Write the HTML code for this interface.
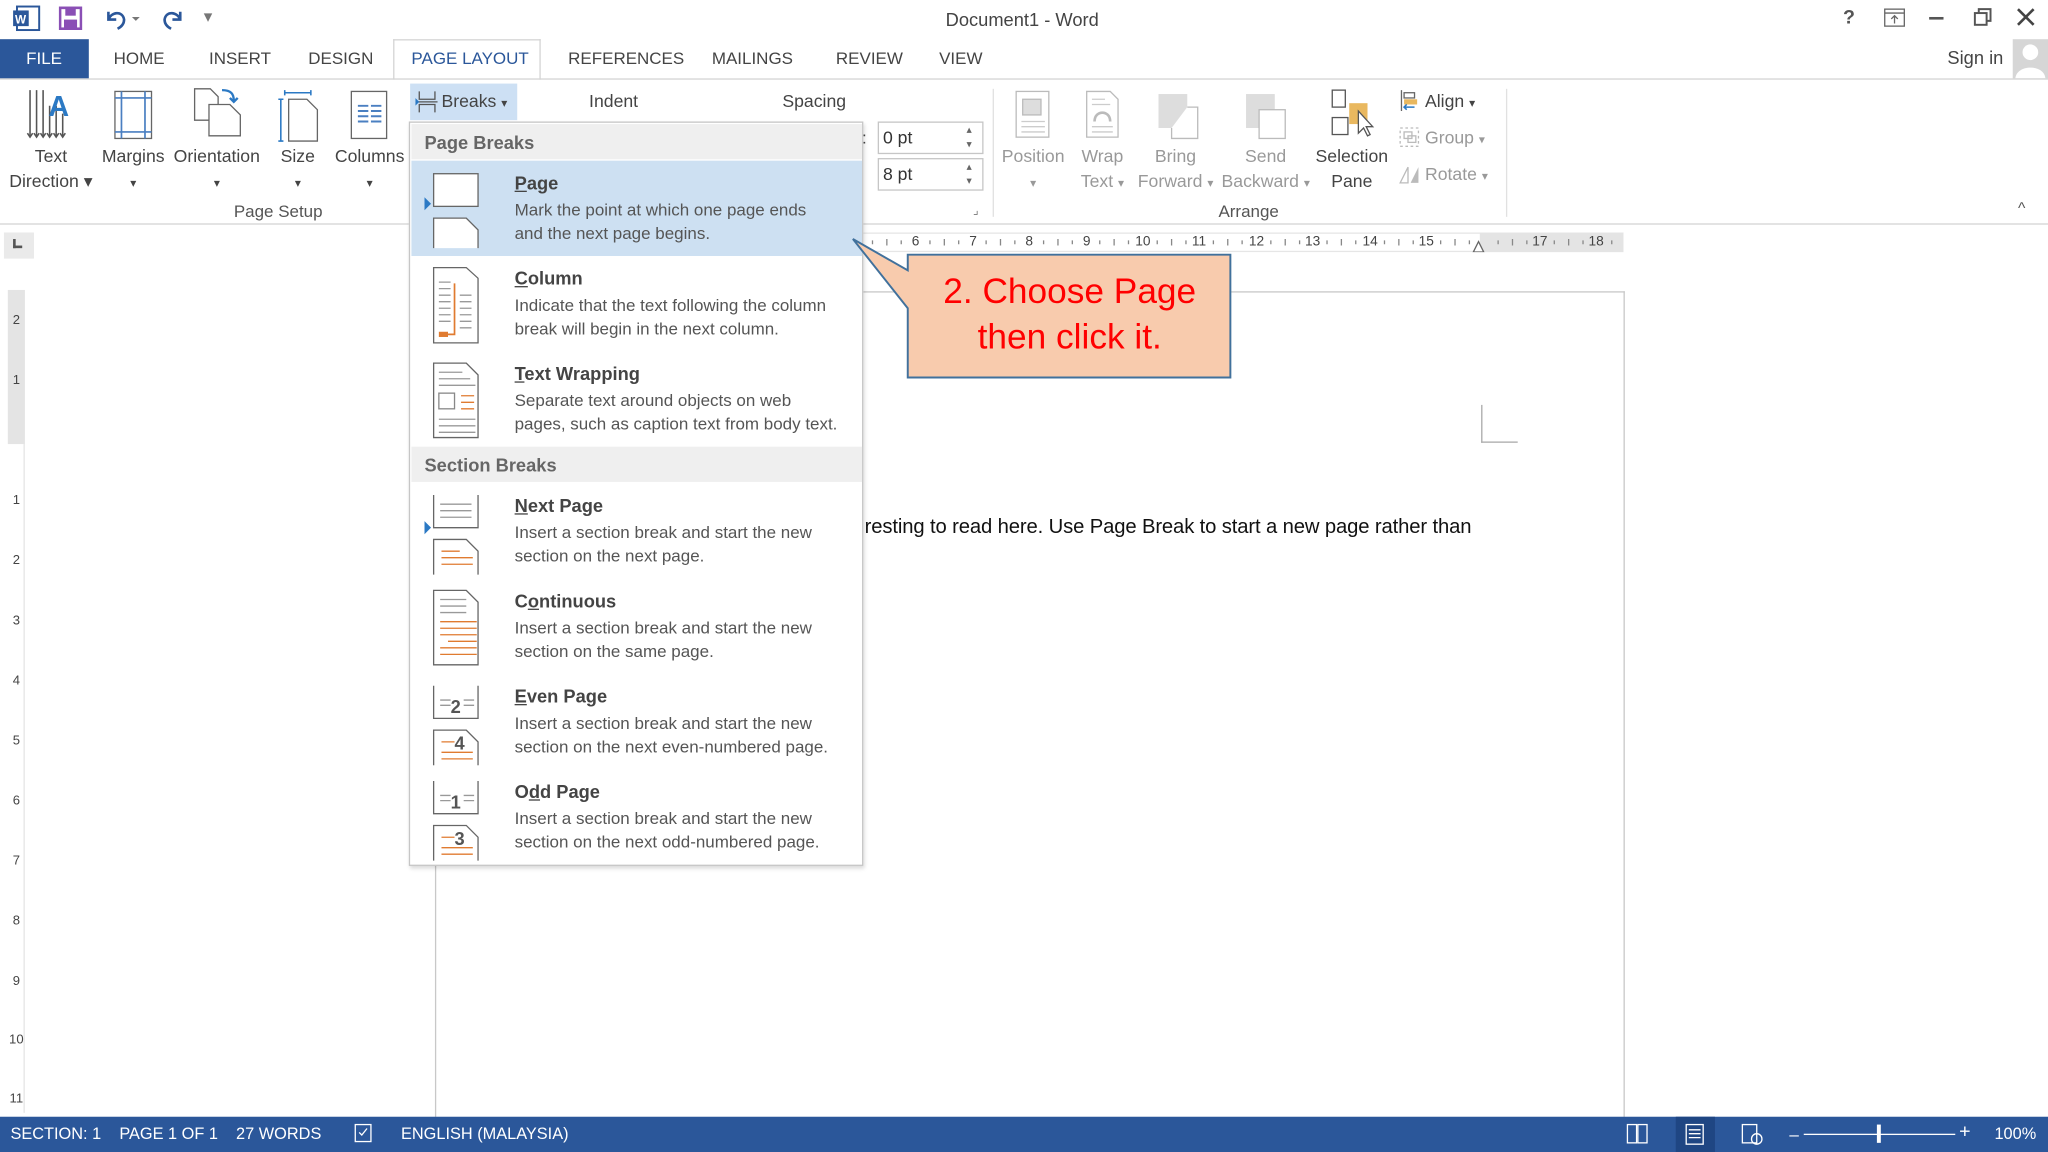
<!DOCTYPE html>
<html><head><meta charset="utf-8"><style>
*{margin:0;padding:0;box-sizing:border-box}
html,body{width:2048px;height:1152px;overflow:hidden;background:#fff}
#w{position:absolute;left:0;top:0;width:1568px;height:882px;transform:scale(1.306122);transform-origin:0 0;font-family:"Liberation Sans",sans-serif;color:#444;background:#fff}
.a{position:absolute}
.t{font-size:13px;color:#444;white-space:nowrap}
.tab{position:absolute;top:37px;font-size:13px;color:#444}
.lbl{position:absolute;font-size:13.5px;color:#444;text-align:center;white-space:nowrap;line-height:19px}
.gl{color:#999}
.mi{position:absolute;left:315px;width:345px;height:73px}
.mi .h{position:absolute;left:79px;top:9px;font-size:14px;font-weight:bold;color:#444}
.mi .d{position:absolute;left:79px;top:29px;font-size:13px;line-height:18px;color:#555;white-space:nowrap}
.mi svg{position:absolute;left:16px;top:8px}
.hd{position:absolute;left:315px;width:345px;height:27px;background:#efefef;font-size:14px;font-weight:bold;color:#666;padding:6px 10px}
.rn{position:absolute;top:179px;font-size:10.5px;color:#444;width:20px;margin-left:-10px;text-align:center}
.vn{position:absolute;left:6px;width:13px;font-size:10px;color:#444;text-align:center}
</style></head><body><div id="w">
<svg class="a" style="left:10px;top:4px" width="22" height="20"><rect x="3" y="1" width="17" height="18" fill="#fff" stroke="#2b579a" stroke-width="1.5"/><rect x="0" y="4" width="12" height="12" fill="#2b579a"/><text x="1.5" y="14" font-size="9" fill="#fff" font-family="Liberation Sans" font-weight="bold">W</text></svg>
<svg class="a" style="left:45px;top:5px" width="18" height="18"><rect x="1" y="1" width="16" height="16" fill="none" stroke="#8a4fb5" stroke-width="2"/><rect x="5" y="1" width="8" height="6" fill="#8a4fb5"/><rect x="4" y="10" width="10" height="7" fill="#8a4fb5"/></svg>
<svg class="a" style="left:78px;top:5px" width="30" height="18"><path d="M5 4 v6 h6 M5 10 C7 4 16 3 17 10 C17 14 14 16 12 17" fill="none" stroke="#2b579a" stroke-width="2"/><path d="M23 8 l3 3 3-3z" fill="#777"/></svg>
<svg class="a" style="left:122px;top:5px" width="22" height="18"><path d="M16 4 v6 h-6 M16 10 C14 4 5 3 4 10 C4 14 7 16 9 17" fill="none" stroke="#2b579a" stroke-width="2"/></svg>
<div class="a t" style="left:156px;top:5px;color:#777">▾</div>
<div class="a" style="left:724px;top:7px;font-size:14px;color:#444">Document1 - Word</div>
<div class="a" style="left:1411px;top:5px;font-size:15px;font-weight:bold;color:#555">?</div>
<svg class="a" style="left:1442px;top:6px" width="18" height="16"><rect x="1" y="1" width="15" height="13" fill="none" stroke="#666"/><line x1="1" y1="4" x2="16" y2="4" stroke="#666"/><path d="M8.5 6 v6 M6 8.5 l2.5-2.5 2.5 2.5" fill="none" stroke="#666"/></svg>
<div class="a" style="left:1477px;top:13px;width:11px;height:2px;background:#555"></div>
<svg class="a" style="left:1511px;top:6px" width="14" height="14"><rect x="1" y="4" width="9" height="9" fill="none" stroke="#555" stroke-width="1.5"/><path d="M4 4 V1 H13 V10 H10" fill="none" stroke="#555" stroke-width="1.5"/></svg>
<svg class="a" style="left:1544px;top:6px" width="14" height="14"><path d="M1 1 L13 13 M13 1 L1 13" stroke="#444" stroke-width="2"/></svg>
<div class="a" style="left:0;top:30px;width:68px;height:30px;background:#2b579a"></div>
<div class="a" style="left:20px;top:37px;font-size:13px;color:#fff">FILE</div>
<div class="a" style="left:301px;top:30px;width:113px;height:31px;background:#fff;border:1px solid #d4d4d4;border-bottom:none"></div>
<div class="tab" style="left:87px">HOME</div>
<div class="tab" style="left:160px">INSERT</div>
<div class="tab" style="left:236px">DESIGN</div>
<div class="tab" style="left:315px;color:#2b579a">PAGE LAYOUT</div>
<div class="tab" style="left:435px">REFERENCES</div>
<div class="tab" style="left:545px">MAILINGS</div>
<div class="tab" style="left:640px">REVIEW</div>
<div class="tab" style="left:719px">VIEW</div>
<div class="a" style="left:1491px;top:36px;font-size:14px;color:#444">Sign in</div>
<div class="a" style="left:1541px;top:30px;width:27px;height:30px;background:#d6d6d6"></div>
<svg class="a" style="left:1541px;top:30px" width="27" height="30"><circle cx="13.5" cy="10" r="6" fill="#fff"/><path d="M2 30 C3 19 24 19 25 30z" fill="#fff"/></svg>
<div class="a" style="left:0;top:60px;width:1568px;height:1px;background:#d4d4d4"></div>
<div class="a" style="left:0;top:171px;width:1568px;height:1px;background:#d4d4d4"></div>
<svg class="a" style="left:20px;top:67px" width="42" height="42"><g stroke="#555" stroke-width="1.2" fill="none"><path d="M3 2 V38 M8 2 V38 M13 2 V38 M18 14 V38 M23 14 V38 M28 20 V38"/><path d="M1 35 l2 3 2-3 M6 35 l2 3 2-3 M11 35 l2 3 2-3 M16 35 l2 3 2-3 M21 35 l2 3 2-3 M26 35 l2 3 2-3"/></g><text x="17" y="22" font-size="22" fill="#2b79c4" font-family="Liberation Sans" font-weight="bold">A</text></svg>
<div class="lbl" style="left:0;top:110px;width:78px">Text<br>Direction ▾</div>
<svg class="a" style="left:87px;top:69px" width="30" height="38"><rect x="1" y="1" width="28" height="36" fill="#fff" stroke="#666"/><path d="M6 1V37 M24 1V37 M1 6H29 M1 32H29" stroke="#4a7fc1" stroke-width="1.3"/></svg>
<div class="lbl" style="left:75px;top:110px;width:54px">Margins<br><span style="font-size:9px">▾</span></div>
<svg class="a" style="left:147px;top:66px" width="40" height="40"><path d="M2 2 H14 L20 8 V26 H2Z" fill="#fff" stroke="#666"/><path d="M13 14 H29 L37 22 V38 H13Z" fill="#fff" stroke="#666"/><path d="M23 3 C30 3 32 6 32 11 M29 9 l3 3 3-3" fill="none" stroke="#2b79c4" stroke-width="1.8"/></svg>
<div class="lbl" style="left:130px;top:110px;width:72px">Orientation<br><span style="font-size:9px">▾</span></div>
<svg class="a" style="left:213px;top:68px" width="32" height="42"><path d="M5 3H25 M5 1v4 M25 1v4 M2 8 V40 M0 8h4 M0 40h4" stroke="#2b79c4" stroke-width="1.2"/><path d="M8 8 H22 L30 16 V40 H8Z" fill="#fff" stroke="#666"/></svg>
<div class="lbl" style="left:210px;top:110px;width:36px">Size<br><span style="font-size:9px">▾</span></div>
<svg class="a" style="left:268px;top:69px" width="30" height="38"><rect x="1" y="1" width="27" height="36" fill="#fff" stroke="#666"/><path d="M6 12h8M16 12h8M6 16h8M16 16h8M6 20h8M16 20h8M6 24h8M16 24h8" stroke="#4a7fc1" stroke-width="1.5"/></svg>
<div class="lbl" style="left:252px;top:110px;width:62px">Columns<br><span style="font-size:9px">▾</span></div>
<div class="lbl gl" style="left:170px;top:152px;width:86px;color:#555;font-size:13px">Page Setup</div>
<div class="a" style="left:314px;top:64px;width:82px;height:28px;background:#cde0f4"></div>
<svg class="a" style="left:318px;top:69px" width="18" height="18"><path d="M3 1V7H15V1 M3 17V11H15V17 M1 9H17" fill="none" stroke="#555"/><path d="M0 6 l3 3-3 3z" fill="#2b79c4"/></svg>
<div class="a t" style="left:338px;top:70px;font-size:13.5px">Breaks <span style="font-size:9px">▾</span></div>
<div class="a t" style="left:451px;top:70px;font-size:13.5px">Indent</div>
<div class="a t" style="left:599px;top:70px;font-size:13.5px">Spacing</div>
<div class="a t" style="left:660px;top:98px">:</div>
<div class="a" style="left:672px;top:93px;width:81px;height:25px;border:1px solid #c6c6c6;background:#fff;font-size:13.5px;color:#333;padding:4px 3px">0 pt</div>
<div class="a" style="left:672px;top:121px;width:81px;height:25px;border:1px solid #c6c6c6;background:#fff;font-size:13.5px;color:#333;padding:4px 3px">8 pt</div>
<div class="a" style="left:740px;top:94px;font-size:8px;color:#666;line-height:11px">▴<br>▾</div>
<div class="a" style="left:740px;top:122px;font-size:8px;color:#666;line-height:11px">▴<br>▾</div>
<div class="a t" style="left:745px;top:156px;font-size:9px;color:#777">⌟</div>
<div class="a" style="left:760px;top:68px;width:1px;height:98px;background:#e1e1e1"></div>
<svg class="a" style="left:776px;top:68px" width="30" height="40"><rect x="2" y="2" width="25" height="35" fill="#fff" stroke="#bbb"/><rect x="7" y="8" width="14" height="12" fill="#ddd" stroke="#bbb"/><path d="M6 25h18M6 29h18M6 33h18" stroke="#ccc"/></svg>
<div class="lbl gl" style="left:764px;top:110px;width:54px">Position<br><span style="font-size:9px">▾</span></div>
<svg class="a" style="left:830px;top:68px" width="28" height="40"><path d="M2 2H20L26 8V37H2Z" fill="#fff" stroke="#bbb"/><path d="M6 8h10M6 12h14M6 29h16M6 33h16" stroke="#ccc"/><path d="M8 25 C8 16 20 16 20 25" fill="none" stroke="#bbb" stroke-width="2"/></svg>
<div class="lbl gl" style="left:820px;top:110px;width:48px">Wrap<br>Text <span style="font-size:9px">▾</span></div>
<svg class="a" style="left:885px;top:70px" width="34" height="38"><rect x="2" y="2" width="22" height="26" fill="#ddd"/><path d="M12 28V36H32V12H24" fill="#fff" stroke="#bbb"/></svg>
<div class="lbl gl" style="left:866px;top:110px;width:68px">Bring<br>Forward <span style="font-size:9px">▾</span></div>
<svg class="a" style="left:952px;top:70px" width="34" height="38"><rect x="2" y="2" width="22" height="26" fill="#ddd"/><rect x="12" y="14" width="20" height="22" fill="#fff" stroke="#bbb"/></svg>
<div class="lbl gl" style="left:932px;top:110px;width:74px">Send<br>Backward <span style="font-size:9px">▾</span></div>
<svg class="a" style="left:1018px;top:67px" width="38" height="42"><rect x="2" y="2" width="10" height="13" fill="#fff" stroke="#555"/><rect x="2" y="23" width="12" height="13" fill="#fff" stroke="#555"/><rect x="15" y="12" width="14" height="16" fill="#e9b85f"/><path d="M22 18 V35 L26 31 L29 37 L31 36 L28 30 L33 30Z" fill="#fff" stroke="#555"/></svg>
<div class="lbl" style="left:1004px;top:110px;width:62px">Selection<br>Pane</div>
<svg class="a" style="left:1071px;top:68px" width="18" height="18"><path d="M2 1V17" stroke="#666"/><rect x="4" y="3" width="8" height="4" fill="#fff" stroke="#666"/><rect x="4" y="8" width="10" height="4" fill="#e9b85f"/><path d="M12 14 H4 M6 12 l-2 2 2 2" fill="none" stroke="#2b79c4" stroke-width="1.2"/></svg>
<div class="a t" style="left:1091px;top:70px;font-size:13.5px">Align <span style="font-size:9px">▾</span></div>
<svg class="a" style="left:1070px;top:96px" width="18" height="18"><rect x="2" y="2" width="14" height="14" fill="none" stroke="#bbb" stroke-dasharray="2 2"/><rect x="5" y="5" width="6" height="5" fill="none" stroke="#bbb"/><rect x="8" y="8" width="6" height="5" fill="none" stroke="#bbb"/></svg>
<div class="a t gl" style="left:1091px;top:98px;font-size:13.5px">Group <span style="font-size:9px">▾</span></div>
<svg class="a" style="left:1070px;top:124px" width="18" height="18"><path d="M2 16 L8 4 V16Z" fill="none" stroke="#bbb"/><path d="M10 16 L16 4 V16Z" fill="#bbb"/></svg>
<div class="a t gl" style="left:1091px;top:126px;font-size:13.5px">Rotate <span style="font-size:9px">▾</span></div>
<div class="lbl" style="left:925px;top:152px;width:62px;font-size:13px;color:#555">Arrange</div>
<div class="a" style="left:1153px;top:68px;width:1px;height:98px;background:#e1e1e1"></div>
<div class="a t" style="left:1545px;top:152px;font-size:12px;color:#555">^</div>
<div class="a" style="left:3px;top:178px;width:23px;height:20px;background:#eaeaea"></div>
<div class="a" style="left:10px;top:183px;width:7px;height:7px;border-left:2px solid #555;border-bottom:2px solid #555"></div>
<div class="a" style="left:660px;top:178px;width:583px;height:15px;background:#fff;border-top:1px solid #e6e6e6;border-bottom:1px solid #e6e6e6"></div>
<div class="a" style="left:1133px;top:178px;width:110px;height:15px;background:#e4e4e4"></div>
<svg class="a" style="left:660px;top:178px" width="583" height="15"><g stroke="#888"><path d="M8 6v3M19 5v5M30 6v3M52 6v3M63 5v5M74 6v3M95 6v3M106 5v5M117 6v3M139 6v3M150 5v5M161 6v3M182 6v3M193 5v5M204 6v3M226 6v3M237 5v5M248 6v3M269 6v3M280 5v5M291 6v3M313 6v3M324 5v5M335 6v3M356 6v3M367 5v5M378 6v3M400 6v3M411 5v5M422 6v3M443 6v3M454 5v5M465 6v3M487 6v3M498 5v5M509 6v3M530 6v3M541 5v5M552 6v3M574 6v3"/></g><path d="M468 15 L472 7 L476 15Z" fill="#fff" stroke="#666"/></svg>
<div class="rn" style="left:701px">6</div><div class="rn" style="left:745px">7</div><div class="rn" style="left:788px">8</div><div class="rn" style="left:832px">9</div><div class="rn" style="left:875px">10</div><div class="rn" style="left:918px">11</div><div class="rn" style="left:962px">12</div><div class="rn" style="left:1005px">13</div><div class="rn" style="left:1049px">14</div><div class="rn" style="left:1092px">15</div><div class="rn" style="left:1179px">17</div><div class="rn" style="left:1222px">18</div>
<div class="a" style="left:6px;top:222px;width:13px;height:630px;background:#fff;border-right:1px solid #e6e6e6"></div>
<div class="a" style="left:6px;top:222px;width:13px;height:118px;background:#e4e4e4"></div>
<div class="vn" style="top:240px">2</div><div class="vn" style="top:286px">1</div><div class="vn" style="top:378px">1</div><div class="vn" style="top:424px">2</div><div class="vn" style="top:470px">3</div><div class="vn" style="top:516px">4</div><div class="vn" style="top:562px">5</div><div class="vn" style="top:608px">6</div><div class="vn" style="top:654px">7</div><div class="vn" style="top:700px">8</div><div class="vn" style="top:746px">9</div><div class="vn" style="top:791px">10</div><div class="vn" style="top:836px">11</div>
<div class="a" style="left:333px;top:223px;width:911px;height:640px;background:#fff;border:1px solid #c8c8c8;border-bottom:none"></div>
<div class="a" style="left:1134px;top:310px;width:28px;height:29px;border-left:1px solid #aaa;border-bottom:1px solid #aaa"></div>
<div class="a" style="left:662px;top:395px;font-size:15.5px;color:#111;white-space:nowrap;letter-spacing:-0.1px">resting to read here. Use Page Break to start a new page rather than</div>
<div class="a" style="left:313px;top:93px;width:348px;height:570px;background:#fff;border:1px solid #c6c6c6;box-shadow:1px 2px 3px rgba(0,0,0,.15)"></div>
<div class="hd" style="top:95px">Page Breaks</div>
<div class="mi" style="top:123px;background:#cde0f2"><svg width="40" height="60" style="top:9px"><rect x="1" y="1" width="34" height="25" fill="#fff" stroke="#666"/><path d="M1 58V35H26L35 44V58" fill="#fff" stroke="#666"/></svg><div class="a" style="left:10px;top:28px;width:0;height:0;border-left:5px solid #2b79c4;border-top:5px solid transparent;border-bottom:5px solid transparent"></div><div class="h"><u>P</u>age</div><div class="d">Mark the point at which one page ends<br>and the next page begins.</div></div>
<div class="mi" style="top:196px"><svg width="40" height="60"><path d="M1 1H26L35 10V65H1Z" fill="#fff" stroke="#666" transform="scale(1,.9)"/><path d="M5 12h9M5 17h9M5 22h9M5 27h9M5 32h9M5 37h9M5 42h9M21 22h9M21 27h9M21 32h9M21 37h9M21 42h9M21 47h9" stroke="#999"/><path d="M17 13V52H8" fill="none" stroke="#e07b30" stroke-width="1.3"/><rect x="5" y="50" width="7" height="4" fill="#e07b30"/></svg><div class="h"><u>C</u>olumn</div><div class="d">Indicate that the text following the column<br>break will begin in the next column.</div></div>
<div class="mi" style="top:269px"><svg width="40" height="60"><path d="M1 1H26L35 10V58H1Z" fill="#fff" stroke="#666"/><path d="M5 8h18M5 13h24M5 18h28M5 44h28M5 49h28M5 54h28" stroke="#999"/><rect x="5" y="24" width="12" height="12" fill="none" stroke="#888"/><path d="M22 26h10M22 31h10M22 36h10" stroke="#e07b30"/></svg><div class="h"><u>T</u>ext Wrapping</div><div class="d">Separate text around objects on web<br>pages, such as caption text from body text.</div></div>
<div class="hd" style="top:342px">Section Breaks</div>
<div class="mi" style="top:370px"><svg width="40" height="62"><path d="M1 1V26H35V1" fill="none" stroke="#666"/><path d="M6 8h24M6 13h24M6 18h24" stroke="#999"/><path d="M1 62V35H26L35 44V62" fill="#fff" stroke="#666"/><path d="M7 44h14M7 49h24M7 54h24" stroke="#e07b30"/></svg><div class="a" style="left:10px;top:29px;border-left:5px solid #2b79c4;border-top:5px solid transparent;border-bottom:5px solid transparent"></div><div class="h"><u>N</u>ext Page</div><div class="d">Insert a section break and start the new<br>section on the next page.</div></div>
<div class="mi" style="top:443px"><svg width="40" height="60"><path d="M1 1H26L35 10V58H1Z" fill="#fff" stroke="#666"/><path d="M6 8h20M6 13h20M6 18h20" stroke="#999"/><path d="M6 25h28M6 30h28M6 35h28M12 40h22M6 45h28M6 50h28" stroke="#e07b30"/></svg><div class="h">C<u>o</u>ntinuous</div><div class="d">Insert a section break and start the new<br>section on the same page.</div></div>
<div class="mi" style="top:516px"><svg width="40" height="62"><path d="M1 1V26H35V1" fill="none" stroke="#666"/><path d="M6 12h8M24 12h8M6 16h8M24 16h8" stroke="#999"/><text x="14" y="22" font-size="14" font-weight="bold" fill="#555" font-family="Liberation Sans">2</text><path d="M1 62V35H26L35 44V62" fill="#fff" stroke="#666"/><text x="17" y="50" font-size="14" font-weight="bold" fill="#555" font-family="Liberation Sans">4</text><path d="M7 44h10M7 52h24M7 57h24" stroke="#e07b30"/></svg><div class="h"><u>E</u>ven Page</div><div class="d">Insert a section break and start the new<br>section on the next even-numbered page.</div></div>
<div class="mi" style="top:589px"><svg width="40" height="62"><path d="M1 1V26H35V1" fill="none" stroke="#666"/><path d="M6 12h8M24 12h8M6 16h8M24 16h8" stroke="#999"/><text x="14" y="22" font-size="14" font-weight="bold" fill="#555" font-family="Liberation Sans">1</text><path d="M1 62V35H26L35 44V62" fill="#fff" stroke="#666"/><text x="17" y="50" font-size="14" font-weight="bold" fill="#555" font-family="Liberation Sans">3</text><path d="M7 44h10M7 52h24M7 57h24" stroke="#e07b30"/></svg><div class="h">O<u>d</u>d Page</div><div class="d">Insert a section break and start the new<br>section on the next odd-numbered page.</div></div>
<svg class="a" style="left:640px;top:175px" width="320" height="125"><path d="M55 20 H302 V114 H55 V61 L13 8 L55 32 Z" fill="#f8cbad" stroke="#41719c" stroke-width="1.5"/></svg>
<div class="a" style="left:695px;top:206px;width:248px;text-align:center;font-size:27px;line-height:35px;color:#ff0000">2. Choose Page<br>then click it.</div>
<div class="a" style="left:0;top:855px;width:1568px;height:27px;background:#2b579a"></div>
<div class="a" style="left:8px;top:861px;font-size:12.5px;color:#fff;white-space:nowrap">SECTION: 1&nbsp;&nbsp;&nbsp;&nbsp;PAGE 1 OF 1&nbsp;&nbsp;&nbsp;&nbsp;27 WORDS</div>
<div class="a" style="left:307px;top:861px;font-size:12.5px;color:#fff;white-space:nowrap">ENGLISH (MALAYSIA)</div>
<svg class="a" style="left:270px;top:860px" width="18" height="16"><rect x="2" y="1" width="12" height="13" fill="none" stroke="#fff"/><path d="M5 7 l2 2 4-5" fill="none" stroke="#fff"/></svg>
<svg class="a" style="left:1245px;top:860px" width="18" height="16"><rect x="1" y="1" width="7" height="14" fill="none" stroke="#fff"/><rect x="9" y="1" width="7" height="14" fill="none" stroke="#fff"/></svg>
<div class="a" style="left:1283px;top:855px;width:30px;height:27px;background:#1f4683"></div>
<svg class="a" style="left:1290px;top:860px" width="16" height="17"><rect x="1" y="1" width="13" height="15" fill="none" stroke="#fff"/><path d="M3 5h9M3 8h9M3 11h9" stroke="#fff"/></svg>
<svg class="a" style="left:1333px;top:860px" width="18" height="17"><rect x="1" y="1" width="11" height="14" fill="none" stroke="#fff"/><circle cx="12" cy="12" r="4" fill="none" stroke="#fff"/></svg>
<div class="a" style="left:1370px;top:861px;font-size:13px;color:#fff">–</div>
<div class="a" style="left:1381px;top:868px;width:116px;height:1px;background:#fff"></div>
<div class="a" style="left:1437px;top:861px;width:3px;height:14px;background:#fff"></div>
<div class="a" style="left:1500px;top:858px;font-size:15px;color:#fff">+</div>
<div class="a" style="left:1527px;top:861px;font-size:12.5px;color:#fff">100%</div>
</div></body></html>
